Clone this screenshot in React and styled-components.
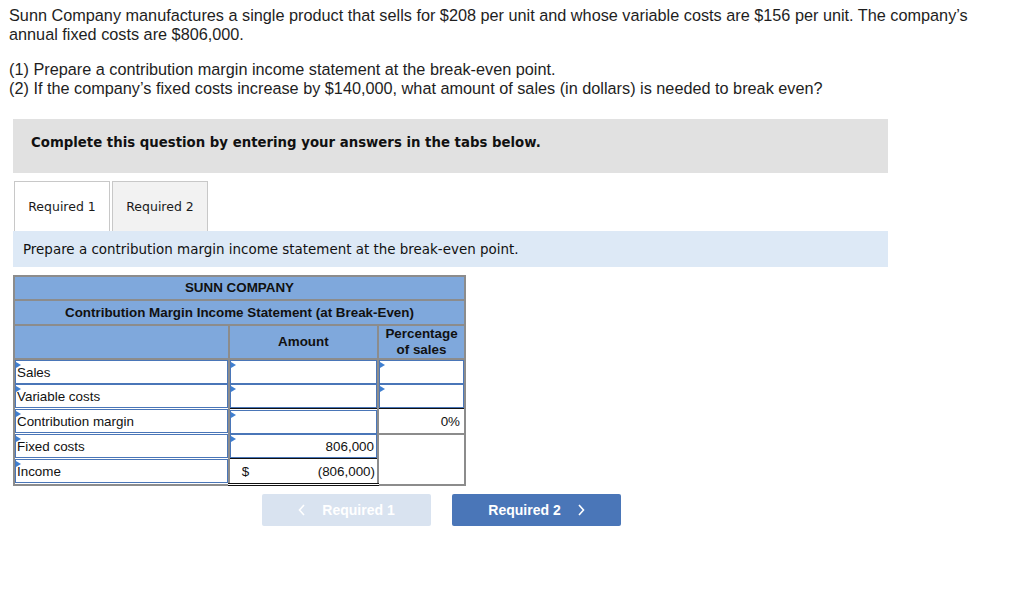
import styled, { createGlobalStyle } from 'styled-components'

const GlobalStyle = createGlobalStyle`
	body {
		margin: 0;
		background: #fff;
		color: #1a1a1a;
	}
`

const Page = styled.div`
	padding: 6px 9px 40px 9px;
	width: 1006px;
`

const Question = styled.div`
	width: 990px;
	font-family: 'Liberation Sans', Arial, sans-serif;
	font-size: 16.25px;
	line-height: 19px;
	color: #1e1e1e;

	p {
		margin: 0 0 16px 0;
	}
`

const Instruction = styled.div`
	margin: 21px 0 0 4px;
	width: 875px;
	height: 54px;
	background: #e1e1e1;
	display: flex;
	align-items: center;
	padding: 0 0 8px 18px;
	box-sizing: border-box;
	font-family: 'DejaVu Sans', Verdana, sans-serif;
	font-size: 13.3px;
	font-weight: bold;
	color: #111;
`

const TabRow = styled.div`
	display: flex;
	gap: 2px;
	margin: 8px 0 0 5px;
`

const Tab = styled.div`
	width: 96px;
	height: 50px;
	box-sizing: border-box;
	border: 1px solid #c8c8c8;
	border-bottom: none;
	background: ${(props) => (props.active ? '#fff' : '#f2f2f2')};
	display: flex;
	align-items: center;
	justify-content: center;
	font-family: 'DejaVu Sans', Verdana, sans-serif;
	font-size: 12.5px;
	color: #1a1a1a;
`

const Band = styled.div`
	margin-left: 4px;
	width: 875px;
	height: 36px;
	background: #dde9f6;
	display: flex;
	align-items: center;
	padding-left: 10px;
	box-sizing: border-box;
	font-family: 'DejaVu Sans', Verdana, sans-serif;
	font-size: 13.45px;
	color: #111;
`

const Table = styled.table`
	margin: 8px 0 0 4px;
	border-collapse: collapse;
	width: 453px;
	font-family: 'Liberation Sans', Arial, sans-serif;
	font-size: 13.4px;
	color: #111;
	border: 2px solid #8c8c8c;
`

const HeadCell = styled.th`
	background: #7fa8dc;
	border: 0 solid #8c8c8c;
	border-width: 0 ${(props) => (props.noRight ? 0 : 2)}px 2px 0;
	height: ${(props) => props.h || 22}px;
	padding: 0 4px;
	font-weight: bold;
	text-align: center;
	line-height: 16px;
	color: #111;
`

const Cell = styled.td`
	position: relative;
	padding: 0;
	height: 24px;
	border-right: 2px solid #8c8c8c;
	border-top: ${(props) => (props.rule ? '1.5px solid #111' : 'none')};
	border-bottom: ${(props) => (props.double ? '3px double #111' : 'none')};
	vertical-align: middle;
`

const InputBox = styled.div`
	position: relative;
	height: 24px;
	box-sizing: border-box;
	border: 1.5px solid #4a76b8;
	background: #fff;
	display: flex;
	align-items: center;
	justify-content: ${(props) => (props.right ? 'flex-end' : 'flex-start')};
	padding: 0 2px 0 1px;
`

const Marker = styled.span`
	position: absolute;
	left: 0;
	top: 1px;
	width: 0;
	height: 0;
	border-top: 3px solid transparent;
	border-bottom: 3px solid transparent;
	border-left: 5px solid #3f7fd0;
`

const Plain = styled.div`
	display: flex;
	justify-content: space-between;
	align-items: center;
	padding: 0 2px 0 12px;
	height: 20px;
`

const Pct = styled.div`
	text-align: right;
	padding-right: 4px;
`

const Nav = styled.div`
	display: flex;
	gap: 21px;
	margin: 8px 0 0 253px;
`

const NavButton = styled.div`
	width: 169px;
	height: 32px;
	border-radius: 2px;
	background: ${(props) => (props.disabled ? '#d9e3f0' : '#4a76b8')};
	color: #fff;
	display: flex;
	align-items: center;
	justify-content: center;
	gap: 16px;
	font-family: 'Liberation Sans', Arial, sans-serif;
	font-size: 14px;
	font-weight: bold;
`

const Chevron = ({ dir }) => (
	<svg width="8" height="12" viewBox="0 0 8 12">
		<path
			d={dir === 'left' ? 'M6 1 L1.5 6 L6 11' : 'M2 1 L6.5 6 L2 11'}
			fill="none"
			stroke="#fff"
			strokeWidth="1.6"
		/>
	</svg>
)

const LabelCell = ({ children }) => (
	<Cell>
		<InputBox>
			<Marker />
			{children}
		</InputBox>
	</Cell>
)

const AmountInput = ({ children }) => (
	<Cell>
		<InputBox right>
			<Marker />
			{children}
		</InputBox>
	</Cell>
)

export default function App() {
	return (
		<Page>
			<GlobalStyle />
			<Question>
				<p>
					Sunn Company manufactures a single product that sells for $208 per unit and whose variable
					costs are $156 per unit. The company’s annual fixed costs are $806,000.
				</p>
				<div>(1) Prepare a contribution margin income statement at the break-even point.</div>
				<div>
					(2) If the company’s fixed costs increase by $140,000, what amount of sales (in dollars) is
					needed to break even?
				</div>
			</Question>

			<Instruction>Complete this question by entering your answers in the tabs below.</Instruction>

			<TabRow>
				<Tab active>Required 1</Tab>
				<Tab>Required 2</Tab>
			</TabRow>
			<Band>Prepare a contribution margin income statement at the break-even point.</Band>

			<Table>
				<colgroup>
					<col style={{ width: 216 }} />
					<col style={{ width: 150 }} />
					<col style={{ width: 87 }} />
				</colgroup>
				<thead>
					<tr>
						<HeadCell colSpan={3} noRight h={22}>
							SUNN COMPANY
						</HeadCell>
					</tr>
					<tr>
						<HeadCell colSpan={3} noRight h={23}>
							Contribution Margin Income Statement (at Break-Even)
						</HeadCell>
					</tr>
					<tr>
						<HeadCell h={30}></HeadCell>
						<HeadCell h={30}>Amount</HeadCell>
						<HeadCell h={30} noRight>
							Percentage
							<br />
							of sales
						</HeadCell>
					</tr>
				</thead>
				<tbody>
					<tr>
						<LabelCell>Sales</LabelCell>
						<AmountInput />
						<AmountInput />
					</tr>
					<tr>
						<LabelCell>Variable costs</LabelCell>
						<AmountInput />
						<AmountInput />
					</tr>
					<tr>
						<LabelCell>Contribution margin</LabelCell>
						<Cell rule>
							<InputBox>
								<Marker />
							</InputBox>
						</Cell>
						<Cell rule style={{ borderBottom: '2px solid #8c8c8c' }}>
							<Pct>0%</Pct>
						</Cell>
					</tr>
					<tr>
						<LabelCell>Fixed costs</LabelCell>
						<AmountInput>806,000</AmountInput>
						<Cell rowSpan={2} />
					</tr>
					<tr>
						<LabelCell>Income</LabelCell>
						<Cell rule double>
							<Plain>
								<span>$</span>
								<span>(806,000)</span>
							</Plain>
						</Cell>
					</tr>
				</tbody>
			</Table>

			<Nav>
				<NavButton disabled>
					<Chevron dir="left" />
					<span>Required 1</span>
				</NavButton>
				<NavButton>
					<span>Required 2</span>
					<Chevron dir="right" />
				</NavButton>
			</Nav>
		</Page>
	)
}
